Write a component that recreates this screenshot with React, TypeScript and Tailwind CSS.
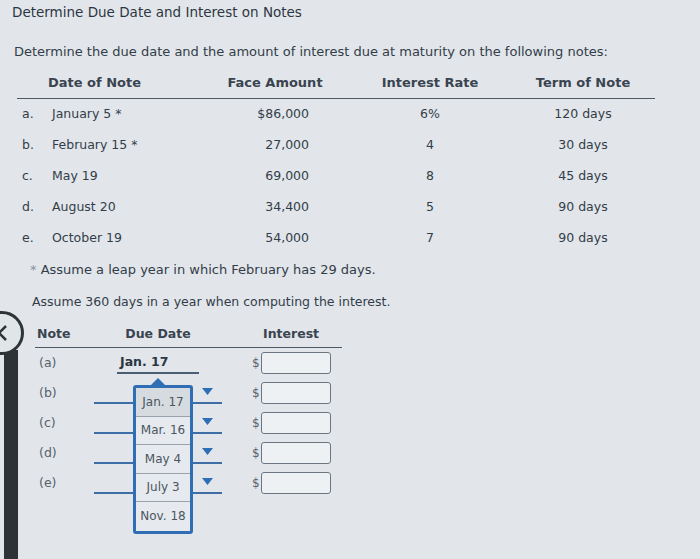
const NOTES = [
  { key: "a.", date: "January 5 *", amount: "$86,000", rate: "6%", term: "120 days" },
  { key: "b.", date: "February 15 *", amount: "27,000", rate: "4", term: "30 days" },
  { key: "c.", date: "May 19", amount: "69,000", rate: "8", term: "45 days" },
  { key: "d.", date: "August 20", amount: "34,400", rate: "5", term: "90 days" },
  { key: "e.", date: "October 19", amount: "54,000", rate: "7", term: "90 days" },
];

const OPTIONS = ["Jan. 17", "Mar. 16", "May 4", "July 3", "Nov. 18"];

const ANSWERS = ["(a)", "(b)", "(c)", "(d)", "(e)"];

function Caret() {
  return (
    <svg width="11" height="7" viewBox="0 0 11 7" className="block">
      <path d="M0 0 H11 L5.5 7 Z" fill="#2f6db5" />
    </svg>
  );
}

function InterestInput() {
  return (
    <div className="flex items-center gap-[1px]">
      <span className="text-[12px] text-[#56616c]">$</span>
      <div className="w-[70px] h-[22px] rounded-[3px] border-[1.5px] border-[#6d7680] bg-[#eef1f4]" />
    </div>
  );
}

export default function App() {
  return (
    <div
      className="relative w-[700px] h-[559px] overflow-hidden bg-[#e2e6ea] text-[#333d49]"
      style={{ fontFamily: '"DejaVu Sans", Verdana, sans-serif' }}
    >
      <h1 className="pl-[12px] pt-[3px] h-[24px] text-[13.5px] leading-[18px] text-[#2c3642]">
        Determine Due Date and Interest on Notes
      </h1>

      <p className="pl-[14px] mt-[19px] text-[13px] leading-[18px]">
        Determine the due date and the amount of interest due at maturity on the following notes:
      </p>

      <div className="ml-[17px] w-[638px] mt-[6px]">
        <div className="grid grid-cols-[208px_100px_210px_120px] h-[32px] items-center border-b-[1.5px] border-[#4d5865] font-bold text-[13px] text-[#3a4450]">
          <div className="pl-[31px]">Date of Note</div>
          <div className="text-center">Face Amount</div>
          <div className="text-center">Interest Rate</div>
          <div className="text-center pr-[24px]">Term of Note</div>
        </div>
        {NOTES.map((n) => (
          <div
            key={n.key}
            className="grid grid-cols-[208px_100px_210px_120px] h-[31px] items-center text-[12.5px]"
          >
            <div className="flex pl-[5px]">
              <span className="w-[30px]">{n.key}</span>
              <span>{n.date}</span>
            </div>
            <div className="text-right pr-[16px]">{n.amount}</div>
            <div className="text-center">{n.rate}</div>
            <div className="text-center pr-[24px]">{n.term}</div>
          </div>
        ))}
      </div>

      <p className="pl-[30px] mt-[7px] text-[13px] leading-[18px]">
        <span className="text-[#8a939c]">*</span> Assume a leap year in which February has 29 days.
      </p>
      <p className="pl-[32px] mt-[14px] text-[12.5px] leading-[18px]">
        Assume 360 days in a year when computing the interest.
      </p>

      <div className="ml-[35px] w-[307px] mt-[10px]">
        <div className="grid grid-cols-[59px_128px_120px] h-[27px] items-center border-b-[1.5px] border-[#4d5865] font-bold text-[12.5px] text-[#3a4450]">
          <div className="pl-[2px]">Note</div>
          <div className="text-center">Due Date</div>
          <div className="pl-[41px]">Interest</div>
        </div>

        <div className="relative">
          {ANSWERS.map((a, i) => (
            <div key={a} className="grid grid-cols-[59px_128px_120px] h-[30px] items-center">
              <div className="pl-[4px] text-[12.5px] text-[#56616c]">{a}</div>
              <div className="h-full flex flex-col justify-end">
                {i === 0 ? (
                  <div className="mx-[23px] mb-[4px] border-b-[2px] border-[#4b5d72] pl-[3px] font-bold text-[12.5px] text-[#2c3642] leading-[20px]">
                    Jan. 17
                  </div>
                ) : (
                  <div className="relative mb-[4px] border-b-[2px] border-[#3e6ea6]">
                    <div className="absolute right-[9px] -top-[14px]">
                      <Caret />
                    </div>
                  </div>
                )}
              </div>
              <div className="pl-[30px]">
                <InterestInput />
              </div>
            </div>
          ))}

          <div className="absolute left-[98px] top-[37px] w-[60px]">
            <div className="absolute left-[18px] -top-[7px] w-0 h-0 border-x-[7px] border-x-transparent border-b-[7px] border-b-[#2f6db5]" />
            <div className="border-[3px] border-[#2f6db5] rounded-[3px] bg-[#e6eaee]">
              {OPTIONS.map((o, i) => (
                <div
                  key={o}
                  className={`h-[28.5px] flex items-center justify-center text-[12px] text-[#4a5561] ${
                    i === 0 ? "bg-[#d6dbe0]" : ""
                  } ${i < OPTIONS.length - 1 ? "border-b border-[#9aa3ac]" : ""}`}
                >
                  {o}
                </div>
              ))}
            </div>
          </div>
        </div>
      </div>

      <div className="absolute left-[4px] top-[350px] bottom-0 w-[14px] bg-[#2e3336]" />
      <div className="absolute -left-[20px] top-[311px] w-[44px] h-[44px] rounded-full border-[3px] border-[#2e3336] bg-[#dfe6e8] flex items-center justify-end pr-[14px]">
        <svg width="10" height="16" viewBox="0 0 10 16">
          <path d="M9 1 L2 8 L9 15" fill="none" stroke="#2e3336" strokeWidth="2.5" />
        </svg>
      </div>
    </div>
  );
}
